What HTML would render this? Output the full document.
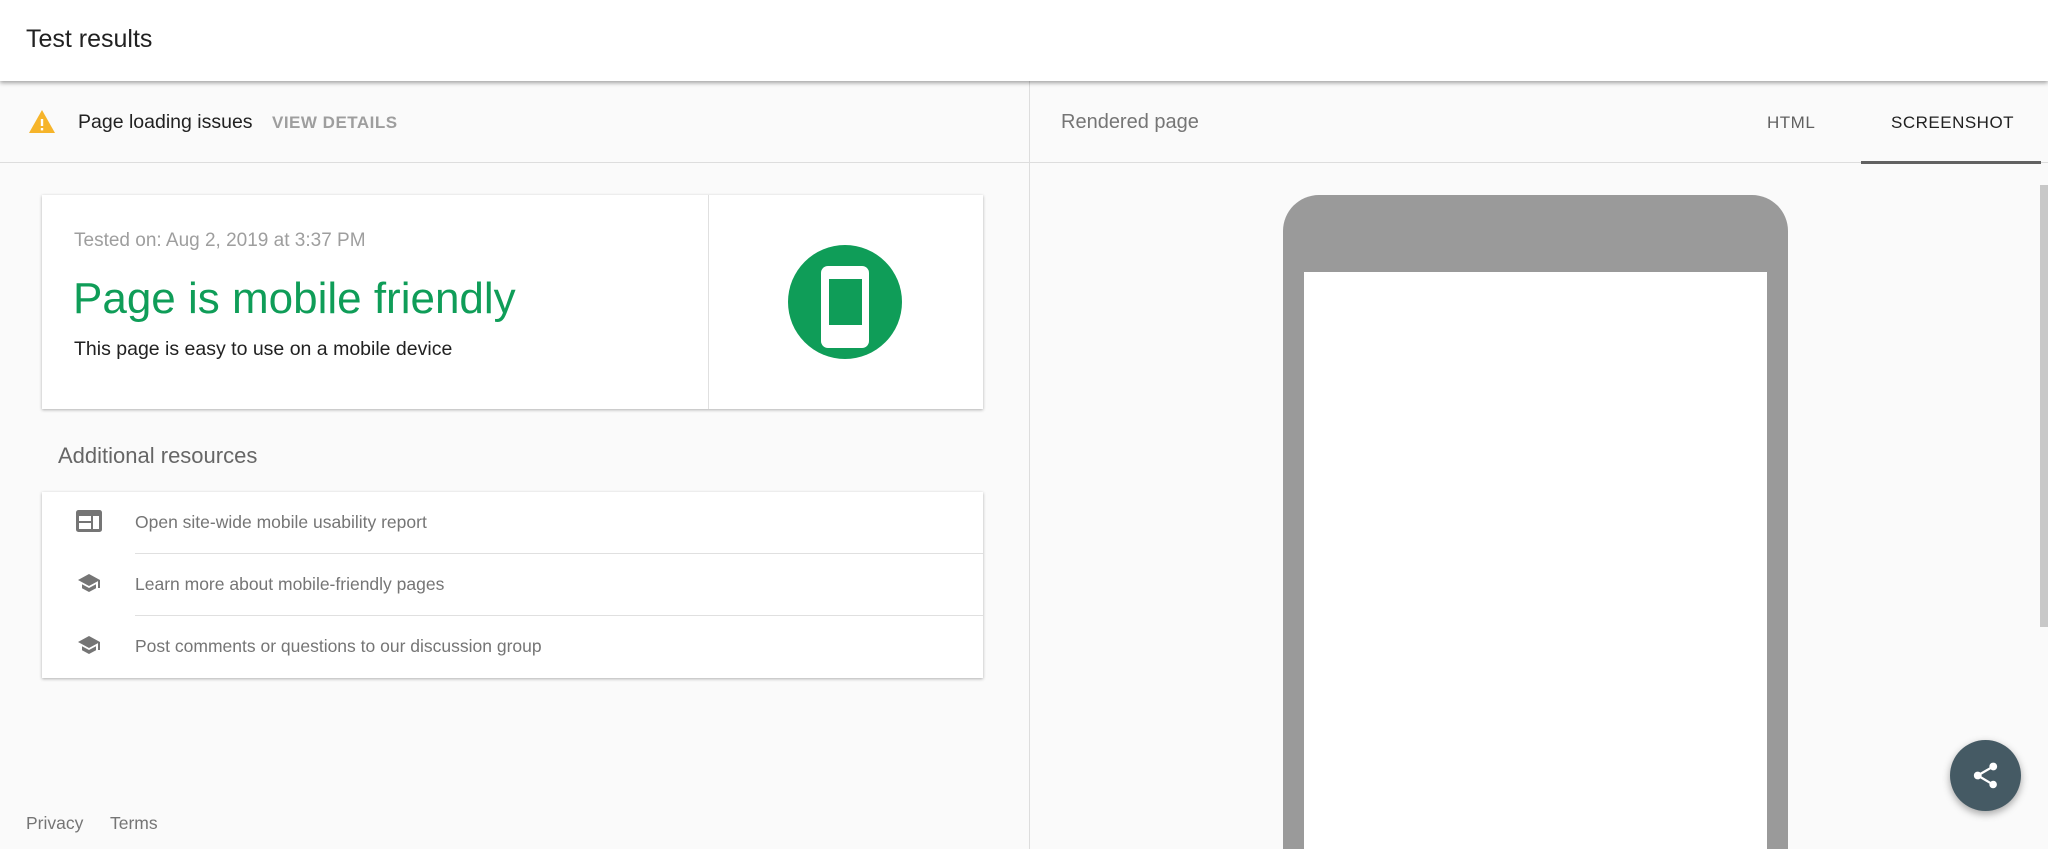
<!DOCTYPE html>
<html style="overflow:hidden;height:849px"><head><meta charset="utf-8"><style>
*{margin:0;padding:0;box-sizing:border-box}
body{width:2048px;height:849px;overflow:hidden;background:#fafafa;font-family:"Liberation Sans",Roboto,sans-serif;position:relative}
.a{position:absolute}
.hdr{left:0;top:0;width:2048px;height:81px;background:#fff;box-shadow:0 2px 4px rgba(0,0,0,.35);z-index:2}
.t{white-space:nowrap}
.card{background:#fff;box-shadow:0 1px 3px rgba(0,0,0,.3)}
</style></head><body>
<div class="a hdr"><div class="a t" style="left:26px;top:25px;font-size:25px;color:#212121">Test results</div></div>
<div class="a" style="left:1029px;top:81px;width:1px;height:768px;background:#ddd"></div>
<div class="a" style="left:0;top:162px;width:2048px;height:1px;background:#ddd"></div>
<svg class="a" style="left:28px;top:109px" width="28" height="25" viewBox="0 0 28 25"><path d="M14 1L27 24H1Z" fill="#f6b42a"/><rect x="12.8" y="10" width="2.4" height="7" fill="#fff"/><rect x="12.8" y="19" width="2.4" height="2.4" fill="#fff"/></svg>
<div class="a t" style="left:78px;top:111px;font-size:19.5px;color:#212121">Page loading issues</div>
<div class="a t" style="left:272px;top:113px;font-size:17px;font-weight:bold;color:#9e9e9e;letter-spacing:.5px">VIEW DETAILS</div>
<div class="a t" style="left:1061px;top:111px;font-size:20px;color:#757575">Rendered page</div>
<div class="a t" style="left:1767px;top:113px;font-size:17px;color:#616161;letter-spacing:.5px">HTML</div>
<div class="a t" style="left:1891px;top:113px;font-size:17px;color:#212121;letter-spacing:.5px">SCREENSHOT</div>
<div class="a" style="left:1861px;top:161px;width:180px;height:3px;background:#616161"></div>
<div class="a" style="left:2040px;top:185px;width:8px;height:442px;background:#c8c8c8"></div>

<div class="a card" style="left:42px;top:195px;width:941px;height:214px">
 <div class="a" style="left:666px;top:0;width:1px;height:214px;background:#e0e0e0"></div>
 <div class="a t" style="left:32px;top:35px;font-size:19px;color:#9e9e9e">Tested on: Aug 2, 2019 at 3:37 PM</div>
 <div class="a t" style="left:31px;top:79px;font-size:44px;color:#0f9d58;font-weight:500">Page is mobile friendly</div>
 <div class="a t" style="left:32px;top:143px;font-size:19.5px;color:#212121">This page is easy to use on a mobile device</div>
 <div class="a" style="left:746px;top:50px;width:114px;height:114px;border-radius:50%;background:#0f9d58"></div>
 <div class="a" style="left:779px;top:71px;width:48px;height:82px;border-radius:7px;background:#fff"></div>
 <div class="a" style="left:787px;top:84px;width:33px;height:46px;background:#0f9d58"></div>
</div>

<div class="a t" style="left:58px;top:443px;font-size:22px;color:#666">Additional resources</div>
<div class="a card" style="left:42px;top:492px;width:941px;height:186px">
 <div class="a" style="left:93px;top:61px;width:848px;height:1px;background:#e0e0e0"></div>
 <div class="a" style="left:93px;top:123px;width:848px;height:1px;background:#e0e0e0"></div>
 <svg class="a" style="left:33px;top:17px" width="28" height="24" viewBox="0 0 28 24"><rect x="1" y="1" width="26" height="22" rx="2.5" fill="#757575"/><rect x="4" y="7" width="12" height="5" fill="#fff"/><rect x="4" y="14" width="12" height="6" fill="#fff"/><rect x="18" y="7" width="6" height="13" fill="#fff"/></svg>
 <svg class="a" style="left:33px;top:79px" width="28" height="24" viewBox="0 0 24 24"><path d="M5 13.2v4L12 21l7-3.8v-4L12 17zM12 3L1 9l11 6 9-4.9V17h2V9z" fill="#757575"/></svg>
 <svg class="a" style="left:33px;top:141px" width="28" height="24" viewBox="0 0 24 24"><path d="M5 13.2v4L12 21l7-3.8v-4L12 17zM12 3L1 9l11 6 9-4.9V17h2V9z" fill="#757575"/></svg>
 <div class="a t" style="left:93px;top:20px;font-size:17.5px;color:#757575">Open site-wide mobile usability report</div>
 <div class="a t" style="left:93px;top:82px;font-size:17.5px;color:#757575">Learn more about mobile-friendly pages</div>
 <div class="a t" style="left:93px;top:144px;font-size:17.5px;color:#757575">Post comments or questions to our discussion group</div>
</div>
<div class="a t" style="left:26px;top:813px;font-size:17.5px;color:#757575">Privacy</div>
<div class="a t" style="left:110px;top:813px;font-size:17.5px;color:#757575">Terms</div>

<div class="a" style="left:1283px;top:195px;width:505px;height:654px;background:#9a9a9a;border-radius:36px 36px 0 0"></div>
<div class="a" style="left:1304px;top:272px;width:463px;height:577px;background:#fff"></div>

<div class="a" style="left:1950px;top:740px;width:71px;height:71px;border-radius:50%;background:#455a64;box-shadow:0 3px 8px rgba(0,0,0,.35)"></div>
<svg class="a" style="left:1970px;top:760px" width="31" height="31" viewBox="0 0 24 24"><path d="M18 16.1c-.8 0-1.4.3-2 .8l-7.1-4.2c.1-.2.1-.5.1-.7s0-.5-.1-.7L16 7.2c.5.5 1.2.8 2 .8 1.7 0 3-1.3 3-3s-1.3-3-3-3-3 1.3-3 3c0 .2 0 .5.1.7L8 9.8C7.5 9.3 6.8 9 6 9c-1.7 0-3 1.3-3 3s1.3 3 3 3c.8 0 1.5-.3 2-.8l7.1 4.2c-.1.2-.1.4-.1.6 0 1.6 1.3 2.9 2.9 2.9s2.9-1.3 2.9-2.9-1.2-2.9-2.8-2.9z" fill="#fff"/></svg>
</body></html>
